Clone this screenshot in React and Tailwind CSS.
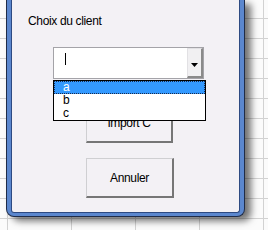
const App = () => {
  const font = "font-['Liberation_Sans',Arial,sans-serif]";

  return (
    <div
      className={`w-[268px] h-[230px] overflow-hidden bg-[#fbfbfb] bg-[linear-gradient(to_right,#d2d2d2_1px,transparent_1px),linear-gradient(to_bottom,#d2d2d2_1px,transparent_1px)] bg-size-[64px_20px] bg-position-[7px_18px] ${font} text-black`}
    >
      {/* window frame */}
      <div className="ml-[6px] w-[239px] h-[217px] flex flex-col border-x border-b border-[#1f2c48] bg-[#5b87ce] rounded-b-[8px] px-[4px] pb-[3px] shadow-[6px_4px_7px_rgba(0,0,0,0.55)]">
        <div className="flex-1 flex flex-col items-start border-x border-b border-[#2d4a82] bg-[#f3f1f5] rounded-b-[3px]">
          <div className="ml-[16px] mt-[13px] text-[12px] leading-[16px] tracking-[-0.35px]">Choix du client</div>

          {/* combo box + open list */}
          <div className="relative ml-[41px] mt-[18px]">
            <div className="w-[151px] h-[32px] flex border border-[#a4a3a8] bg-white">
              <div className="flex-1">
                <div className="ml-[11px] mt-[5px] w-px h-[12px] bg-black" />
              </div>
              <div className="w-[16px] flex items-center justify-center bg-[#f1f0f2] border-l border-t border-[#e2e1e4] border-r-2 border-b-2 border-r-[#8a8a8a] border-b-[#8a8a8a]">
                <svg width="7" height="4" viewBox="0 0 7 4" className="mt-[4px]">
                  <path d="M0 0H7L3.5 4Z" fill="#000" />
                </svg>
              </div>
            </div>

            <div className="absolute left-0 top-[33px] z-10 w-[153px] border border-black bg-white text-[12px] leading-[13px]">
              <div className="h-[13px] pl-[9px] bg-[#3399ff] text-white outline outline-1 outline-dotted outline-offset-[-1px] outline-[#1b2a4a]">a</div>
              <div className="h-[13px] pl-[9px]">b</div>
              <div className="h-[13px] pl-[9px]">c</div>
            </div>
          </div>

          <button className="ml-[74px] mt-[24px] w-[87px] h-[40px] flex items-center justify-center text-[12px] tracking-[-0.35px] bg-[#f3f1f5] border-l border-t border-[#cfcfd2] border-r-2 border-b-2 border-r-[#767676] border-b-[#767676]">
            Import C
          </button>

          <button className="ml-[74px] mt-[15px] w-[88px] h-[40px] flex items-center justify-center text-[12px] tracking-[-0.35px] bg-[#f3f1f5] border-l border-t border-[#cfcfd2] border-r-2 border-b-2 border-r-[#767676] border-b-[#767676]">
            Annuler
          </button>
        </div>
      </div>
    </div>
  );
};

export default App;
